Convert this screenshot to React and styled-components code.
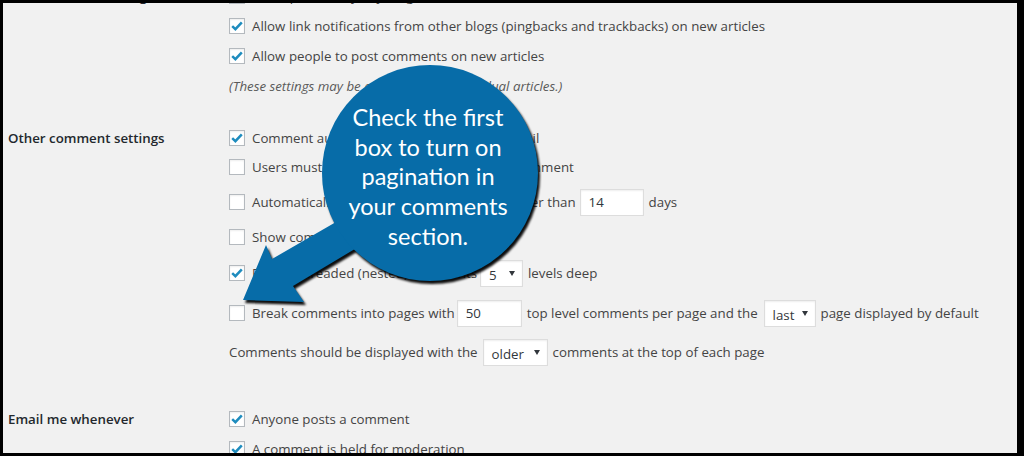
import styled, { createGlobalStyle } from "styled-components";

const GlobalStyle = createGlobalStyle`
  html, body {
    margin: 0;
    padding: 0;
    background: #000;
  }
  body {
    font-family: "Open Sans", "Noto Sans", sans-serif;
    font-size: 13.3px;
    color: #444;
  }
`;

const Frame = styled.div`
  position: relative;
  margin: 3px 7px 3px 3px;
  height: 450px;
  background: #f1f1f1;
  overflow: hidden;
  padding-left: 5px;
  box-sizing: border-box;
`;

const Section = styled.section`
  display: grid;
  grid-template-columns: 221px 1fr;
  margin-top: ${(p) => p.$mt}px;
`;

const Label = styled.div`
  height: 28px;
  display: flex;
  align-items: center;
  font-weight: 600;
  color: #23282d;
`;

const Fieldset = styled.div`
  display: flex;
  flex-direction: column;
`;

const Row = styled.div`
  height: 28px;
  display: flex;
  align-items: center;
  white-space: nowrap;
  margin-top: ${(p) => p.$mt || 0}px;
`;

const Note = styled.span`
  font-style: italic;
  color: #5a5a5a;
`;

const Box = styled.span`
  width: 16px;
  height: 16px;
  box-sizing: border-box;
  flex: none;
  margin-right: 7px;
  background: #fff;
  border: 1px solid #b4b9be;
  box-shadow: inset 0 1px 2px rgba(0, 0, 0, 0.07);
  display: flex;
  align-items: center;
  justify-content: center;
`;

const Field = styled.span`
  height: 27px;
  width: ${(p) => p.$w}px;
  box-sizing: border-box;
  margin: 0 ${(p) => p.$mr ?? 5}px 0 ${(p) => p.$ml ?? 5}px;
  padding: 0 7px 0 8px;
  background: #fff;
  border: 1px solid #ddd;
  box-shadow: inset 0 1px 2px rgba(0, 0, 0, 0.07);
  color: #32373c;
  display: flex;
  align-items: center;
  justify-content: space-between;
`;

const SelectText = styled.span`
  padding-top: 3px;
`;

const Callout = styled.div`
  position: absolute;
  left: 227px;
  top: 57px;
  width: 320px;
  height: 260px;
  pointer-events: none;
`;

const CalloutArt = styled.svg`
  position: absolute;
  inset: 0;
  overflow: visible;
  filter: drop-shadow(2px 3px 1.2px rgba(0, 0, 0, 0.95));
`;

const CalloutText = styled.div`
  position: absolute;
  left: 90px;
  top: 43px;
  width: 216px;
  text-align: center;
  font-family: Lato, "Open Sans", sans-serif;
  font-size: 23.5px;
  line-height: 29.7px;
  color: #fff;
`;

function Check({ on }) {
  return (
    <Box>
      {on && (
        <svg width="12" height="10" viewBox="0 0 12 10">
          <path d="M1.2 5.2 L4.4 8.2 L10.8 1.4" fill="none" stroke="#1e8cbe" strokeWidth="2.5" />
        </svg>
      )}
    </Box>
  );
}

function Select({ w, value, ml, mr }) {
  return (
    <Field $w={w} $ml={ml} $mr={mr}>
      <SelectText>{value}</SelectText>
      <svg width="6" height="5" viewBox="0 0 6 5">
        <path d="M0 0 H6 L3 5 Z" fill="#32373c" />
      </svg>
    </Field>
  );
}

export default function App() {
  return (
    <>
      <GlobalStyle />
      <Frame>
        <Section $mt={-21}>
          <Label>Default article settings</Label>
          <Fieldset>
            <Row>
              <Check on />
              Attempt to notify any blogs linked to from the article
            </Row>
            <Row $mt={2}>
              <Check on />
              Allow link notifications from other blogs (pingbacks and trackbacks) on new articles
            </Row>
            <Row $mt={2}>
              <Check on />
              Allow people to post comments on new articles
            </Row>
            <Row $mt={2}>
              <Note>(These settings may be overridden for individual articles.)</Note>
            </Row>
          </Fieldset>
        </Section>

        <Section $mt={24}>
          <Label>Other comment settings</Label>
          <Fieldset>
            <Row>
              <Check on />
              Comment author must fill out name and email
            </Row>
            <Row $mt={1}>
              <Check />
              Users must be registered and logged in to comment
            </Row>
            <Row $mt={7}>
              <Check />
              Automatically close comments on articles older than
              <Field $w={64} $ml={4}>14</Field>
              days
            </Row>
            <Row $mt={7}>
              <Check />
              Show comments cookies opt-in checkbox
            </Row>
            <Row $mt={8}>
              <Check on />
              Enable threaded (nested) comments
              <Select w={43} value="5" ml={3} />
              levels deep
            </Row>
            <Row $mt={12}>
              <Check />
              Break comments into pages with
              <Field $w={65} $ml={2}>50</Field>
              top level comments per page and the
              <Select w={52} value="last" ml={6} />
              page displayed by default
            </Row>
            <Row $mt={11}>
              Comments should be displayed with the
              <Select w={65} value="older" />
              comments at the top of each page
            </Row>
          </Fieldset>
        </Section>

        <Section $mt={39}>
          <Label>Email me whenever</Label>
          <Fieldset>
            <Row>
              <Check on />
              Anyone posts a comment
            </Row>
            <Row $mt={2}>
              <Check on />
              A comment is held for moderation
            </Row>
          </Fieldset>
        </Section>

        <Callout>
          <CalloutArt width="320" height="260" viewBox="230 60 320 260">
            <g fill="#076ca8">
              <polygon points="243,300 266,245 272,259 400,185 415,213 293,286 304,302" />
              <circle cx="430" cy="173" r="108" />
            </g>
          </CalloutArt>
          <CalloutText>
            Check the first
            <br />
            box to turn on
            <br />
            pagination in
            <br />
            your comments
            <br />
            section.
          </CalloutText>
        </Callout>
      </Frame>
    </>
  );
}
